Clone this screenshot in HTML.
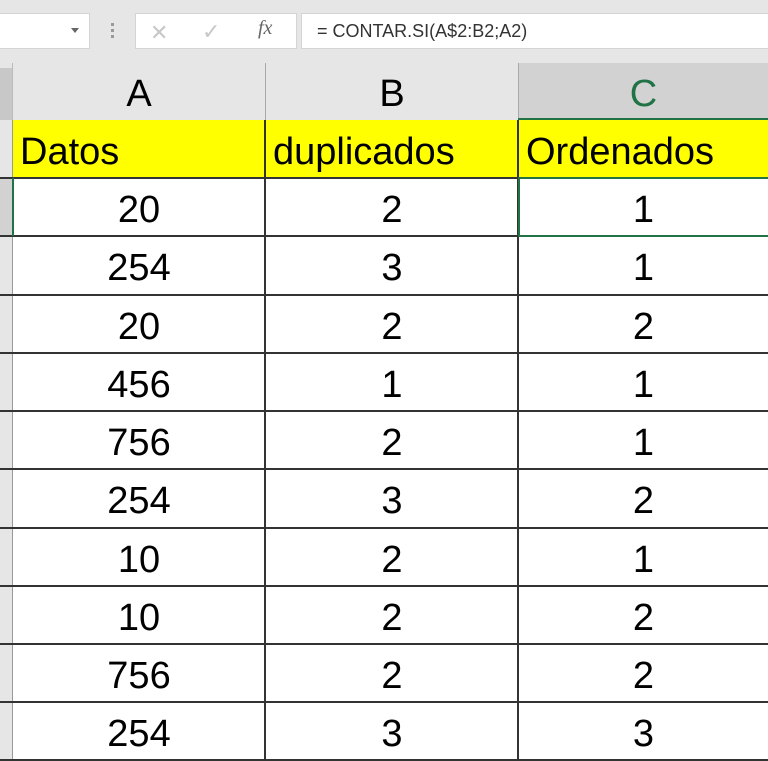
<!DOCTYPE html>
<html><head><meta charset="utf-8"><style>
*{margin:0;padding:0;box-sizing:border-box}
body{width:768px;height:761px;overflow:hidden;background:#fff;position:relative;font-family:"Liberation Sans",sans-serif}
.abs{position:absolute}
.cell{position:absolute;display:flex;align-items:center;justify-content:center;font-size:38px;color:#000;padding-top:6px}
.h{position:absolute;background:#333}
</style></head><body>
<div class="abs" style="left:0;top:0;width:768px;height:63px;background:#e6e6e6"></div>
<div class="abs" style="left:0;top:13px;width:90px;height:36px;background:#fff;border:1px solid #d4d4d4;border-left:none"></div>
<div class="abs" style="left:71px;top:28px;width:0;height:0;border-left:4px solid transparent;border-right:4px solid transparent;border-top:5px solid #666"></div>
<div class="abs" style="left:111px;top:23px;width:3px;height:3px;background:#999;box-shadow:0 6px 0 #999,0 12px 0 #999"></div>
<div class="abs" style="left:135px;top:13px;width:162px;height:36px;background:#fff;border:1px solid #d4d4d4"></div>
<div class="abs" style="left:150px;top:20px;font-size:22px;color:#c8c8c8">✕</div>
<div class="abs" style="left:202px;top:19px;font-size:22px;color:#c8c8c8">✓</div>
<div class="abs" style="left:258px;top:17px;font-size:20px;color:#666;font-style:italic;font-family:'Liberation Serif',serif">fx</div>
<div class="abs" style="left:301px;top:13px;width:467px;height:36px;background:#fff;border:1px solid #d4d4d4;border-right:none"></div>
<div class="abs" style="left:317px;top:21px;font-size:18px;color:#333">= CONTAR.SI(A$2:B2;A2)</div>
<div class="abs" style="left:0;top:63px;width:768px;height:57px;background:#e6e6e6"></div>
<div class="abs" style="left:518px;top:63px;width:250px;height:57px;background:#d2d2d2"></div>
<div class="abs" style="left:0;top:68px;width:12px;height:52px;background:#c8c8c8"></div>
<div class="abs" style="left:12px;top:63px;width:1px;height:57px;background:#bbb"></div>
<div class="abs" style="left:265px;top:63px;width:1px;height:57px;background:#aaa"></div>
<div class="abs" style="left:518px;top:63px;width:1px;height:57px;background:#aaa"></div>
<div class="abs" style="left:518px;top:118px;width:250px;height:2px;background:#217346"></div>
<div class="cell" style="left:13px;top:63px;width:252px;height:57px">A</div>
<div class="cell" style="left:266px;top:63px;width:252px;height:57px">B</div>
<div class="cell" style="left:519px;top:63px;width:249px;height:57px;color:#217346">C</div>
<div class="abs" style="left:0;top:120px;width:12px;height:641px;background:#e6e6e6"></div>
<div class="abs" style="left:0;top:178px;width:12px;height:58px;background:#d2d2d2"></div>
<div class="abs" style="left:12px;top:120px;width:756px;height:58px;background:#ffff00"></div>
<div class="cell" style="left:20px;top:120px;height:58px;justify-content:flex-start">Datos</div>
<div class="cell" style="left:273px;top:120px;height:58px;justify-content:flex-start">duplicados</div>
<div class="cell" style="left:526px;top:120px;height:58px;justify-content:flex-start">Ordenados</div>
<div class="h" style="left:12px;top:120px;width:1px;height:641px;background:#999"></div>
<div class="h" style="left:264px;top:120px;width:2px;height:641px"></div>
<div class="h" style="left:517px;top:120px;width:2px;height:641px"></div>
<div class="h" style="left:0;top:177px;width:768px;height:2px"></div>
<div class="h" style="left:0;top:235px;width:768px;height:2px"></div>
<div class="h" style="left:0;top:294px;width:768px;height:2px"></div>
<div class="h" style="left:0;top:352px;width:768px;height:2px"></div>
<div class="h" style="left:0;top:410px;width:768px;height:2px"></div>
<div class="h" style="left:0;top:468px;width:768px;height:2px"></div>
<div class="h" style="left:0;top:527px;width:768px;height:2px"></div>
<div class="h" style="left:0;top:585px;width:768px;height:2px"></div>
<div class="h" style="left:0;top:643px;width:768px;height:2px"></div>
<div class="h" style="left:0;top:701px;width:768px;height:2px"></div>
<div class="h" style="left:0;top:759px;width:768px;height:2px"></div>
<div class="abs" style="left:12px;top:178px;width:2px;height:58px;background:#217346"></div>
<div class="abs" style="left:518px;top:177px;width:250px;height:60px;border:2px solid #217346;border-right:none"></div>
<div class="cell" style="left:13px;top:178px;width:252px;height:58px">20</div><div class="cell" style="left:266px;top:178px;width:252px;height:58px">2</div><div class="cell" style="left:519px;top:178px;width:249px;height:58px">1</div>
<div class="cell" style="left:13px;top:236px;width:252px;height:59px">254</div><div class="cell" style="left:266px;top:236px;width:252px;height:59px">3</div><div class="cell" style="left:519px;top:236px;width:249px;height:59px">1</div>
<div class="cell" style="left:13px;top:295px;width:252px;height:58px">20</div><div class="cell" style="left:266px;top:295px;width:252px;height:58px">2</div><div class="cell" style="left:519px;top:295px;width:249px;height:58px">2</div>
<div class="cell" style="left:13px;top:353px;width:252px;height:58px">456</div><div class="cell" style="left:266px;top:353px;width:252px;height:58px">1</div><div class="cell" style="left:519px;top:353px;width:249px;height:58px">1</div>
<div class="cell" style="left:13px;top:411px;width:252px;height:58px">756</div><div class="cell" style="left:266px;top:411px;width:252px;height:58px">2</div><div class="cell" style="left:519px;top:411px;width:249px;height:58px">1</div>
<div class="cell" style="left:13px;top:469px;width:252px;height:59px">254</div><div class="cell" style="left:266px;top:469px;width:252px;height:59px">3</div><div class="cell" style="left:519px;top:469px;width:249px;height:59px">2</div>
<div class="cell" style="left:13px;top:528px;width:252px;height:58px">10</div><div class="cell" style="left:266px;top:528px;width:252px;height:58px">2</div><div class="cell" style="left:519px;top:528px;width:249px;height:58px">1</div>
<div class="cell" style="left:13px;top:586px;width:252px;height:58px">10</div><div class="cell" style="left:266px;top:586px;width:252px;height:58px">2</div><div class="cell" style="left:519px;top:586px;width:249px;height:58px">2</div>
<div class="cell" style="left:13px;top:644px;width:252px;height:58px">756</div><div class="cell" style="left:266px;top:644px;width:252px;height:58px">2</div><div class="cell" style="left:519px;top:644px;width:249px;height:58px">2</div>
<div class="cell" style="left:13px;top:702px;width:252px;height:58px">254</div><div class="cell" style="left:266px;top:702px;width:252px;height:58px">3</div><div class="cell" style="left:519px;top:702px;width:249px;height:58px">3</div>
</body></html>
